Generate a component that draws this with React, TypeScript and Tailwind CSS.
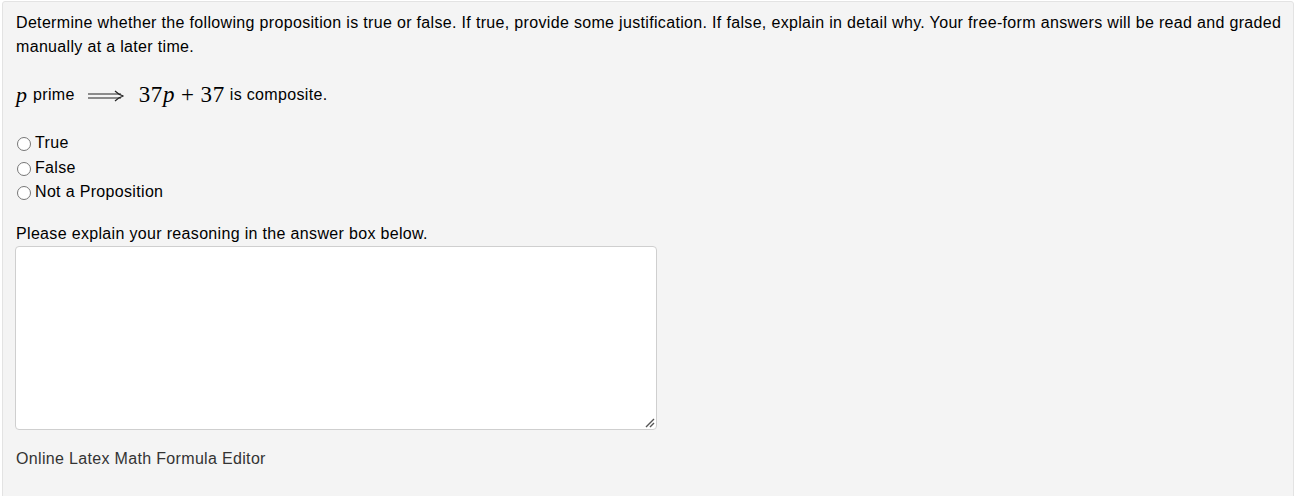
import React from "react";

function Radio({ label }: { label: string }) {
  return (
    <label className="flex items-center h-[24.5px]">
      <span className="inline-block w-[14px] h-[14px] rounded-full border border-[#767676] bg-white mr-[4px] ml-px mt-[2px]" />
      <span>{label}</span>
    </label>
  );
}

export default function App() {
  return (
    <div className="bg-white h-[496px] pt-px pl-[2px] pr-[2px] overflow-hidden" style={{ fontFamily: '"Liberation Sans", Arial, sans-serif' }}>
      <div className="bg-[#f4f4f4] border border-[#e3e3e3] rounded-[3px] pl-[13px] pr-[10px] pt-[9px] pb-8 text-[16px] leading-[24px] tracking-[0.33px] text-black h-[520px]">
        <p>
          Determine whether the following proposition is true or false. If true, provide some justification. If false, explain in detail why. Your free-form answers will be read and graded manually at a later time.
        </p>
        <div className="mt-[24px] h-[24px] flex items-center">
          <span className="text-[22px] italic tracking-normal" style={{ fontFamily: '"Liberation Serif", "DejaVu Serif", serif' }}>p</span>
          <span className="ml-[6px]">prime</span>
          <svg className="ml-[13px] mt-[1px]" width="36" height="12" viewBox="0 0 36 12">
            <path d="M0 4 H33 M0 8 H33" stroke="#222" strokeWidth="1" fill="none" />
            <path d="M27 1 Q31 5 35.5 6 Q31 7 27 11" stroke="#222" strokeWidth="1.1" fill="none" />
          </svg>
          <span className="ml-[15px] text-[23px] tracking-[0.6px]" style={{ fontFamily: '"Liberation Serif", "DejaVu Serif", serif' }}>
            37<span className="italic">p</span>
            <span className="mx-[6px]">+</span>37
          </span>
          <span className="ml-[5px]">is composite.</span>
        </div>
        <div className="mt-[24px]">
          <Radio label="True" />
          <Radio label="False" />
          <Radio label="Not a Proposition" />
        </div>
        <p className="mt-[17px]">Please explain your reasoning in the answer box below.</p>
        <div className="relative -ml-px w-[642px] h-[184px] bg-white border border-[#cfcfcf] rounded-[4px]">
          <svg className="absolute right-[1px] bottom-[1px]" width="12" height="12" viewBox="0 0 12 12">
            <path d="M11 3 L3 11 M11 7 L7 11" stroke="#555" strokeWidth="1.4" fill="none" />
          </svg>
        </div>
        <p className="mt-[17px] text-[#333]">Online Latex Math Formula Editor</p>
      </div>
    </div>
  );
}
